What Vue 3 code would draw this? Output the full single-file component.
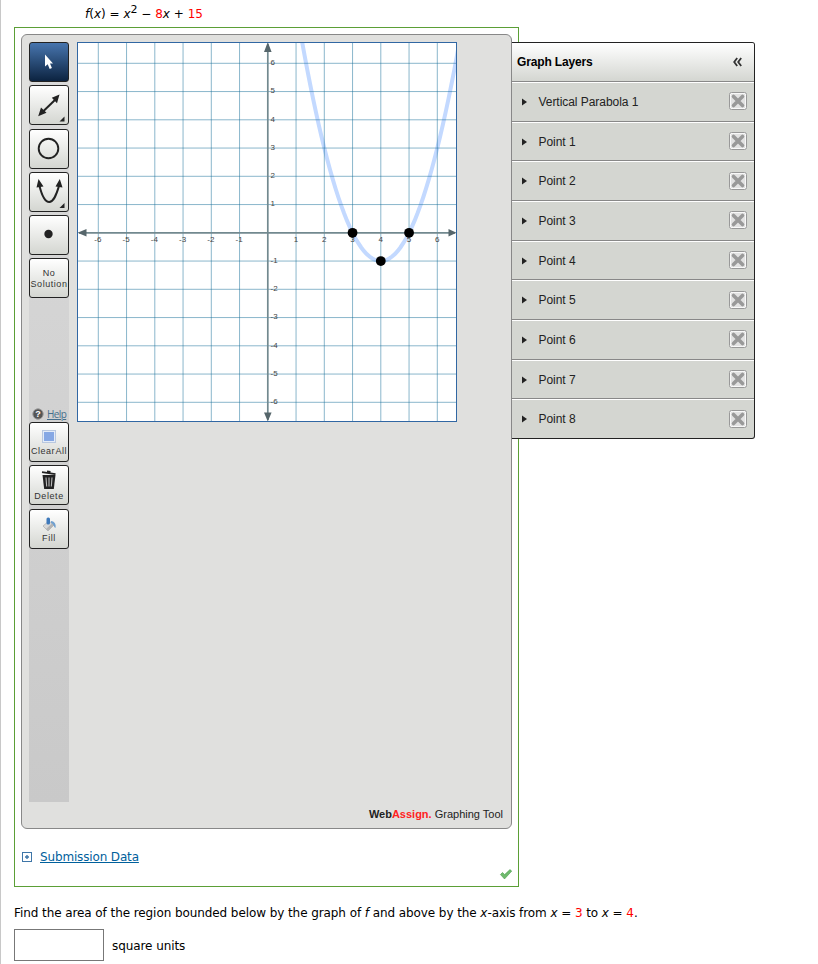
<template>
  <div class="page">
    <div class="equation">
      <i>f</i>(<i>x</i>) = <i>x</i><sup>2</sup> − <span class="red">8</span><i>x</i> + <span class="red">15</span>
    </div>

    <div class="answer-box">
      <div class="tool-row">
        <div class="graph-tool">
          <div class="main">
            <div class="toolbar">
              <button class="tool active">
                <svg width="36" height="36" viewBox="0 0 36 36">
                  <path d="M14 10.500V22.500L16.700 20.200L18.700 25L20.900 24L19 19.500H22Z" fill="#fff" />
                </svg>
              </button>
              <button class="tool">
                <svg width="36" height="36" viewBox="0 0 36 36">
                  <path d="M11 25.500L26 11" stroke="#222" stroke-width="2" />
                  <path d="M28.500 7.500L20.800 10.800L26 16.300ZM7.200 29.300L15.500 25.800L10 20.500Z" fill="#222" />
                  <path d="M33.500 29.500V34.500H28.500Z" fill="#222" />
                </svg>
              </button>
              <button class="tool">
                <svg width="36" height="36" viewBox="0 0 36 36">
                  <circle cx="17.500" cy="17.500" r="9.800" fill="none" stroke="#222" stroke-width="1.900" />
                </svg>
              </button>
              <button class="tool">
                <svg width="36" height="36" viewBox="0 0 36 36">
                  <path d="M8.500 12C11 22 14 28 18.200 28S25 22 28 12" fill="none" stroke="#222" stroke-width="2" />
                  <path d="M7.500 5L5.500 13.500L12.500 12.500ZM28.800 5L24.500 12.500L31.500 13.500Z" fill="#222" />
                  <path d="M33.500 29V34H28.500Z" fill="#222" />
                </svg>
              </button>
              <button class="tool">
                <svg width="36" height="36" viewBox="0 0 36 36">
                  <circle cx="17.500" cy="17" r="4.200" fill="#222" />
                </svg>
              </button>
              <button class="tool text-tool">No<br />Solution</button>

              <div class="help">
                <svg width="12" height="12" viewBox="0 0 12 12">
                  <circle cx="6" cy="6" r="5.200" fill="#555" stroke="#999" />
                  <text x="6" y="9.200" text-anchor="middle" class="question">?</text>
                </svg>
                <a>Help</a>
              </div>

              <button class="tool labelled clear">
                <svg width="14" height="13" viewBox="0 0 14 13">
                  <rect x="0.500" y="0.500" width="13" height="12" fill="#e4ecf8" stroke="#b9c8df" />
                  <rect x="2" y="2" width="10" height="9" fill="#86a8e4" />
                </svg>
                <span>Clear All</span>
              </button>
              <button class="tool labelled delete">
                <svg width="16" height="20" viewBox="0 0 16 20">
                  <path d="M1 2.200L14.500 4.200M6 1.500L9.500 2" stroke="#222" stroke-width="1.800" />
                  <path d="M1.500 5H14.500L12.800 19H3.200Z" fill="#222" />
                  <path d="M5 7.500L5.700 16.500M8 7.500V16.500M11 7.500L10.300 16.500" stroke="#bbb" stroke-width="1.100" />
                </svg>
                <span>Delete</span>
              </button>
              <button class="tool labelled fill">
                <svg width="16" height="16" viewBox="0 0 16 16">
                  <path d="M2 10L8 5L13 9L7 15Z" fill="#d8d8d8" stroke="#aaa" stroke-width="0.700" />
                  <path d="M7 15L13 9L11 7.500L5 13Z" fill="#b4b4b4" />
                  <rect x="5.500" y="1.500" width="3.500" height="7" rx="1.500" fill="#3e79bb" />
                  <path d="M10 5C13 5 15.500 8 14.500 12C12.500 11 13 8 10 7Z" fill="#70a0cf" />
                </svg>
                <span>Fill</span>
              </button>
            </div>

            <svg class="graph" width="380" height="380" viewBox="0 0 380 380">
              <rect width="380" height="380" fill="#fff" />
              <path :d="parabola" fill="none" stroke="#c3d9ff" stroke-width="4" />
              <g stroke="#187099" stroke-opacity="0.500" stroke-width="1">
                <template v-for="n in ticks" :key="`grid-${n}`">
                  <line :x1="px(n)" y1="0" :x2="px(n)" y2="380" />
                  <line x1="0" :y1="py(n)" x2="380" :y2="py(n)" />
                </template>
              </g>
              <g stroke="#72898f" stroke-width="1.700">
                <line :x1="px(0)" y1="2" :x2="px(0)" y2="378" />
                <line x1="2" :y1="py(0)" x2="378" :y2="py(0)" />
              </g>
              <path
                d="M190.800 0L187 10H194.600ZM190.800 379.500L187 370.500H194.600ZM0.500 190.800L9.500 187V194.600ZM379.500 190.800L371.500 187V194.600Z"
                fill="#56666b"
              />
              <g class="numbers">
                <template v-for="n in ticks" :key="`num-${n}`">
                  <text :x="px(n) - (n < 0 ? 0.5 : 0)" :y="py(0) + 9.500" text-anchor="middle">{{ n }}</text>
                  <text x="193.500" :y="py(n) + 1.800">{{ n }}</text>
                </template>
              </g>
              <circle v-for="p in points" :key="p.x" :cx="px(p.x)" :cy="py(p.y)" r="4.900" fill="#000" />
              <rect x="0.500" y="0.500" width="379" height="379" fill="none" stroke="#3167a3" />
            </svg>
          </div>

          <div class="brand"><b>Web<span>Assign.</span></b> Graphing Tool</div>
        </div>

        <div class="layers">
          <div class="layers-head">
            <span>Graph Layers</span>
            <svg width="10" height="10" viewBox="0 0 10 10">
              <path d="M5.200 1L2.200 5L5.200 9M9.200 1L6.200 5L9.200 9" fill="none" stroke="#333" stroke-width="1.800" />
            </svg>
          </div>
          <div v-for="layer in layers" :key="layer" class="layer">
            <svg width="5" height="8" viewBox="0 0 5 8"><path d="M0 0.500L5 4L0 7.500Z" fill="#222" /></svg>
            <span>{{ layer }}</span>
            <svg class="remove" width="18" height="18" viewBox="0 0 18 18">
              <rect x="0.500" y="0.500" width="17" height="17" rx="2" fill="#f8f8f8" stroke="#999" />
              <rect x="2" y="2" width="14" height="14" fill="#e2e2e2" />
              <path d="M4.500 4.500L13.500 13.500M13.500 4.500L4.500 13.500" stroke="#999" stroke-width="3.600" stroke-linecap="round" />
            </svg>
          </div>
        </div>
      </div>

      <div class="submission">
        <svg width="10" height="10" viewBox="0 0 10 10">
          <rect x="0.500" y="0.500" width="9" height="9" fill="#fff" stroke="#3f76a8" />
          <path d="M3 5H7M5 3V7" stroke="#3f76a8" stroke-width="1.400" />
        </svg>
        <a>Submission Data</a>
      </div>
      <svg class="check" width="14" height="12" viewBox="0 0 14 12">
        <path d="M0.700 6.300L3 4L5.500 6.300L11.500 0.700L13.500 2.400L5.300 11.300Z" fill="#6fba6d" stroke="#4b9e4f" stroke-width="0.700" />
      </svg>
    </div>

    <div class="question-text">
      Find the area of the region bounded below by the graph of <i>f</i> and above by the <i>x</i>-axis from
      <i>x</i> = <span class="red">3</span> to <i>x</i> = <span class="red">4</span>.
    </div>
    <div class="answer">
      <input type="text" />
      <span>square units</span>
    </div>
  </div>
</template>

<script setup>
import { computed } from 'vue'

const ticks = [-6, -5, -4, -3, -2, -1, 1, 2, 3, 4, 5, 6]
const points = [
  { x: 3, y: 0 },
  { x: 5, y: 0 },
  { x: 4, y: -1 }
]
const layers = ['Vertical Parabola 1', ...Array.from({ length: 8 }, (_, i) => `Point ${i + 1}`)]

const unit = 28.25
const center = 190.8

function px(x) {
  return center + x * unit
}

function py(y) {
  return center - y * unit
}

const parabola = computed(() => {
  const parts = []
  for (let x = 1; x <= 7; x += 0.1) {
    parts.push(`${px(x).toFixed(2)} ${py(x * x - 8 * x + 15).toFixed(2)}`)
  }
  return `M${parts.join('L')}`
})
</script>

<style>
body {
  background: #fff;
}
</style>

<style scoped>
.page {
  box-sizing: border-box;
  height: 964px;
  overflow: hidden;
  border-left: 1px solid #c8c8c8;
  padding-left: 13px;
  font-family: 'DejaVu Sans', Verdana, sans-serif;
  font-size: 12px;
  letter-spacing: -0.08px;
  color: #000;
}
.red {
  color: #f00;
}
.equation {
  box-sizing: border-box;
  height: 27px;
  line-height: 27px;
  padding-top: 1px;
  padding-left: 71px;
  letter-spacing: 0;
  white-space: nowrap;
}
.equation sup {
  font-size: 11px;
  line-height: 0;
  vertical-align: 5px;
}
.answer-box {
  box-sizing: border-box;
  width: 505px;
  height: 860px;
  border: 1px solid #5b9f36;
  padding: 6px;
  display: flex;
  flex-direction: column;
}
.tool-row {
  display: flex;
  align-items: flex-start;
}
.graph-tool {
  box-sizing: border-box;
  flex: none;
  width: 491px;
  height: 795px;
  border: 1px solid #888;
  border-radius: 6px;
  background: #e0e0de;
  padding: 7px;
}
.main {
  display: flex;
  align-items: flex-start;
  gap: 8px;
}
.toolbar {
  width: 40px;
  height: 760px;
  background: linear-gradient(#dadada, #c9c9c9);
  display: flex;
  flex-direction: column;
  gap: 3.3px;
}
.tool {
  box-sizing: border-box;
  flex: none;
  width: 40px;
  height: 40px;
  padding: 0;
  border: 1px solid #222;
  border-radius: 3px;
  background: linear-gradient(#fff, #d4d6d1);
  display: flex;
  align-items: center;
  justify-content: center;
  color: #333;
  font-family: 'Liberation Sans', sans-serif;
  font-size: 9px;
  line-height: 11px;
  letter-spacing: 0.9px;
  white-space: nowrap;
}
.tool.active {
  background: linear-gradient(#4775ae, #0c2340);
}
.text-tool {
  padding-top: 2px;
  letter-spacing: 0.55px;
}
.labelled {
  flex-direction: column;
  justify-content: flex-end;
}
.labelled span {
  letter-spacing: 0.6px;
}
.clear {
  gap: 3px;
  padding-bottom: 4px;
}
.clear span {
  letter-spacing: 0.5px;
  word-spacing: -2px;
}
.delete {
  gap: 1px;
  padding-bottom: 2px;
}
.fill {
  gap: 1px;
  margin-bottom: 253.500px;
  padding-bottom: 4px;
}
.help {
  margin-top: auto;
  margin-bottom: -3px;
  padding-left: 3px;
  display: flex;
  align-items: center;
  gap: 3px;
  height: 16px;
  font-family: 'Open Sans', sans-serif;
  font-size: 10px;
  letter-spacing: -0.6px;
}
.help a {
  color: #466f8d;
  text-decoration: underline;
}
.question {
  font: bold 9px 'Liberation Sans', sans-serif;
  letter-spacing: 0;
  fill: #fff;
}
.graph {
  display: block;
}
.numbers {
  font: 8px 'Liberation Sans', sans-serif;
  letter-spacing: 0;
  fill: #444;
}
.brand {
  padding-right: 1px;
  text-align: right;
  font: 11px / 25px 'Liberation Sans', sans-serif;
  letter-spacing: 0;
  color: #222;
}
.brand b {
  font-size: 11px;
}
.brand span {
  color: #f22;
}
.layers {
  box-sizing: border-box;
  flex: none;
  width: 243px;
  height: 397px;
  margin-top: 8px;
  border: 1px solid #222;
  border-left: none;
  border-radius: 0 3px 3px 0;
  background: #d4d6d1;
  display: flex;
  flex-direction: column;
  overflow: hidden;
  font-family: 'Liberation Sans', Arial, sans-serif;
  font-size: 12px;
  letter-spacing: -0.05px;
}
.layers-head {
  box-sizing: border-box;
  height: 38px;
  flex: none;
  padding: 0 12px 0 5px;
  background: linear-gradient(#fff, #d4d6d1);
  display: flex;
  align-items: center;
  justify-content: space-between;
  font-weight: bold;
  letter-spacing: -0.15px;
}
.layer {
  box-sizing: border-box;
  flex: 1;
  border-top: 1px solid #888;
  box-shadow: inset 0 1px #fff;
  padding: 1px 7px 0 10px;
  display: flex;
  align-items: center;
  color: #222;
}
.layer span {
  margin-left: 11.500px;
}
.remove {
  margin: -1px 0 0 auto;
}
.submission {
  box-sizing: border-box;
  height: 54px;
  display: flex;
  align-items: center;
  gap: 8px;
  padding: 7px 0 0 1px;
  letter-spacing: -0.15px;
}
.submission a {
  color: #00609c;
  text-decoration: underline;
}
.check {
  align-self: flex-end;
  margin: -8px -1px 0 0;
}
.question-text {
  margin-top: 16px;
  line-height: 20px;
  white-space: nowrap;
}
.answer {
  margin-top: 6px;
  display: flex;
  align-items: center;
  gap: 8px;
}
.answer input {
  box-sizing: border-box;
  width: 90px;
  height: 32px;
  border: 1px solid #777;
  background: #fff;
}
.answer span {
  padding-top: 2px;
}
</style>
